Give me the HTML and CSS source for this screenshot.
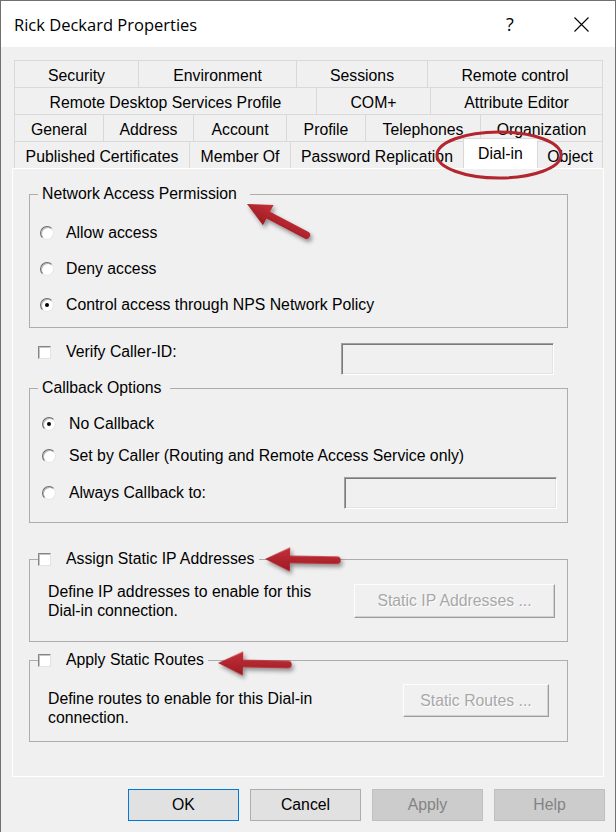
FILE: index.html
```html
<!DOCTYPE html>
<html>
<head>
<meta charset="utf-8">
<title>Rick Deckard Properties</title>
<link rel="stylesheet" href="styles.css">
</head>
<body>
<div class="window">
  <div class="titlebar">
    <div class="title">Rick Deckard Properties</div>
    <div class="caption help">?</div>
    <div class="caption close">
      <svg width="15" height="15" viewBox="0 0 15 15"><path d="M0.5 0.5L14.5 14.5M14.5 0.5L0.5 14.5" stroke="#000" stroke-width="1.1" fill="none"/></svg>
    </div>
  </div>
  <div class="client">
    <div class="tabs">
      <div class="tabrow">
        <div class="tab w-security">Security</div>
        <div class="tab w-env">Environment</div>
        <div class="tab w-sessions">Sessions</div>
        <div class="tab w-remote">Remote control</div>
      </div>
      <div class="tabrow">
        <div class="tab w-rdsp">Remote Desktop Services Profile</div>
        <div class="tab w-com">COM+</div>
        <div class="tab w-attr">Attribute Editor</div>
      </div>
      <div class="tabrow">
        <div class="tab w-general">General</div>
        <div class="tab w-address">Address</div>
        <div class="tab w-account">Account</div>
        <div class="tab w-profile">Profile</div>
        <div class="tab w-tel">Telephones</div>
        <div class="tab w-org">Organization</div>
      </div>
      <div class="tabrow">
        <div class="tab w-pub">Published Certificates</div>
        <div class="tab w-member">Member Of</div>
        <div class="tab w-pwd">Password Replication</div>
        <div class="tab w-dial active">Dial-in</div>
        <div class="tab w-object">Object</div>
      </div>
    </div>

    <div class="panel">
      <fieldset class="group nap">
        <legend class="text-legend">Network Access Permission</legend>
        <div class="opt"><span class="radio"></span><span>Allow access</span></div>
        <div class="opt"><span class="radio"></span><span>Deny access</span></div>
        <div class="opt"><span class="radio on"></span><span>Control access through NPS Network Policy</span></div>
      </fieldset>

      <div class="verify">
        <div class="chk-line"><span class="check"></span><span>Verify Caller-ID:</span></div>
        <span class="textbox"></span>
      </div>

      <fieldset class="group callback">
        <legend class="text-legend cb-legend">Callback Options</legend>
        <div class="opt"><span class="radio on"></span><span>No Callback</span></div>
        <div class="opt second"><span class="radio"></span><span>Set by Caller (Routing and Remote Access Service only)</span></div>
        <div class="opt third"><span class="radio"></span><span>Always Callback to:</span><span class="textbox"></span></div>
      </fieldset>

      <fieldset class="group assign">
        <legend class="chk-legend"><span class="chk-line"><span class="check"></span><span>Assign Static IP Addresses</span></span></legend>
        <div class="desc-row">
          <p class="desc">Define IP addresses to enable for this<br>Dial-in connection.</p>
          <button class="sbtn ip" disabled>Static IP Addresses ...</button>
        </div>
      </fieldset>

      <fieldset class="group routes">
        <legend class="chk-legend"><span class="chk-line"><span class="check"></span><span>Apply Static Routes</span></span></legend>
        <div class="desc-row">
          <p class="desc">Define routes to enable for this Dial-in<br>connection.</p>
          <button class="sbtn rt" disabled>Static Routes ...</button>
        </div>
      </fieldset>
    </div>

    <div class="actions">
      <button class="btn default">OK</button>
      <button class="btn">Cancel</button>
      <button class="btn" disabled>Apply</button>
      <button class="btn" disabled>Help</button>
    </div>
  </div>

  <svg class="annot" width="616" height="832" viewBox="0 0 616 832">
    <defs>
      <filter id="sh" x="-30%" y="-60%" width="170%" height="240%">
        <feDropShadow dx="2" dy="3" stdDeviation="2" flood-color="#000" flood-opacity="0.4"/>
      </filter>
      <linearGradient id="ag" x1="0" y1="0" x2="0" y2="1">
        <stop offset="0" stop-color="#c8303a"/>
        <stop offset="1" stop-color="#9a1b22"/>
      </linearGradient>
    </defs>
    <ellipse cx="499" cy="155" rx="62" ry="23" fill="none" stroke="#b3262d" stroke-width="3"/>
    <g filter="url(#sh)" fill="url(#ag)">
      <path transform="translate(247 204) rotate(27.6)" d="M0 0L24 -11.5L24 -3.8L67 -3.8A3.8 3.8 0 0 1 67 3.8L24 3.8L24 11.5Z"/>
      <path transform="translate(265 559) rotate(1)" d="M0 0L25 -12L25 -3.8L72 -3.8A3.8 3.8 0 0 1 72 3.8L25 3.8L25 12Z"/>
      <path transform="translate(218 663) rotate(1.2)" d="M0 0L25 -12L25 -3.8L70 -3.8A3.8 3.8 0 0 1 70 3.8L25 3.8L25 12Z"/>
    </g>
  </svg>
</div>
</body>
</html>
```

FILE: styles.css
```css
body {
  margin: 0;
  background: #fff;
  font-family: "Liberation Sans", Arial, sans-serif;
  font-size: 15.8px;
  color: #000;
}

.window {
  position: relative;
  width: 616px;
  height: 832px;
  box-sizing: border-box;
  border: 1px solid #707070;
  border-bottom: 0;
  background: #f0f0f0;
  overflow: hidden;
}

.titlebar {
  height: 46px;
  background: #fff;
  display: flex;
  align-items: center;
  padding: 0 11px 0 13px;
}
.title {
  flex: 1;
  font-family: "Open Sans", "Noto Sans", sans-serif;
  font-size: 16.5px;
}
.caption {
  width: 46px;
  height: 46px;
  display: flex;
  align-items: center;
  justify-content: center;
}
.help {
  margin-right: 25px;
  font-family: "Open Sans", "Noto Sans", sans-serif;
  font-size: 18px;
}

.client {
  padding: 13px 11px 0;
}

/* tabs */
.tabs { margin: 0 1px 0 2px; }
.tabrow { display: flex; height: 27px; }
.tab {
  box-sizing: border-box;
  height: 27px;
  border-top: 1px solid #d9d9d9;
  border-left: 1px solid #d9d9d9;
  padding-top: 3px;
  line-height: 23px;
  text-align: center;
  white-space: nowrap;
  flex: none;
}
.tab:last-child { border-right: 1px solid #d9d9d9; }
.tab.active {
  background: #fff;
  margin-top: -3px;
  height: 30px;
}
.w-security { width: 124px; }
.w-env { width: 158px; }
.w-sessions { width: 131px; }
.w-remote { width: 176px; }
.w-rdsp { width: 302px; }
.w-com { width: 114px; }
.w-attr { width: 173px; }
.w-general { width: 89px; }
.w-address { width: 90px; }
.w-account { width: 93px; }
.w-profile { width: 79px; }
.w-tel { width: 115px; }
.w-org { width: 123px; }
.w-pub { width: 175px; }
.w-member { width: 101px; }
.w-pwd { width: 173px; }
.w-dial { width: 74px; }
.w-object { width: 66px; }

/* panel */
.panel {
  border: 1px solid #fff;
  padding: 16px 35px 34px 16px;
}

.group {
  margin: 0;
  padding: 0;
  border: 1px solid #adadad;
  min-width: 0;
}
legend {
  height: 18px;
  line-height: 18px;
  padding: 0;
}
.text-legend {
  margin-left: 8px;
  padding: 0 13px 0 4px;
}
.cb-legend { padding-right: 9px; }
.chk-legend {
  margin-left: 8px;
  padding: 0 4px 0 0;
}

.opt {
  display: flex;
  align-items: center;
  height: 18px;
}

.radio {
  flex: none;
  position: relative;
  width: 14px;
  height: 14px;
  box-sizing: border-box;
  border-radius: 50%;
  background: #fff;
  border: 1px solid;
  border-color: #6a6a6a #e6e6e6 #e6e6e6 #6a6a6a;
  box-shadow: inset 1px 1px 0 #b8b8b8;
}
.radio.on::after {
  content: "";
  position: absolute;
  left: 4px;
  top: 4px;
  width: 4px;
  height: 4px;
  border-radius: 50%;
  background: #000;
}

.check {
  flex: none;
  width: 13px;
  height: 13px;
  box-sizing: border-box;
  background: #fff;
  border: 1px solid;
  border-color: #858585 #e3e3e3 #e3e3e3 #858585;
  box-shadow: inset 1px 1px 0 #c4c4c4;
  margin-right: 15px;
}
.chk-line {
  display: flex;
  align-items: center;
  height: 18px;
}

.textbox {
  display: block;
  box-sizing: border-box;
  width: 213px;
  height: 32px;
  margin-left: auto;
  background: #f0f0f0;
  border: 1px solid;
  border-color: #a0a0a0 #fff #fff #a0a0a0;
  box-shadow: inset 1px 1px 0 #7a7a7a, inset -1px -1px 0 #e3e3e3;
}

/* network access permission */
.nap { padding: 21px 0 13px; }
.nap .opt { padding-left: 10px; }
.nap .radio { margin-right: 12px; }
.nap .opt + .opt { margin-top: 18px; }

/* verify */
.verify {
  display: flex;
  align-items: flex-start;
  margin-top: 15px;
  padding: 0 14px 0 9px;
}

/* callback */
.callback { margin-top: 4px; padding: 18px 0 13px; }
.callback .opt { padding-left: 12px; }
.callback .radio { margin-right: 13px; }
.callback .opt.second { margin-top: 14px; }
.callback .opt.third {
  height: 32px;
  margin-top: 12px;
  padding-right: 10px;
}

/* static groups */
.assign { margin-top: 27px; padding: 14px 0 21px; }
.routes { margin-top: 9px; padding: 15px 0 14px; }
.desc-row {
  display: flex;
  align-items: flex-start;
}
.assign .desc-row { padding: 0 12px 0 18px; }
.routes .desc-row { padding: 0 18px 0 18px; }
.desc {
  margin: 0;
  line-height: 19px;
}
.routes .desc { margin-top: 5px; }

.sbtn {
  margin-left: auto;
  box-sizing: border-box;
  background: #f0f0f0;
  border: 1px solid;
  border-color: #fdfdfd #9c9c9c #9c9c9c #fdfdfd;
  box-shadow: inset -1px -1px 0 #d2d2d2;
  color: #a8a8a8;
  text-shadow: 1px 1px 0 #fff;
  font: inherit;
  padding: 0;
}
.sbtn.ip { width: 201px; height: 34px; margin-top: 2px; }
.sbtn.rt { width: 146px; height: 33px; }

/* dialog buttons */
.actions {
  display: flex;
  justify-content: flex-end;
  gap: 11px;
  margin: 12px -1px 0 0;
}
.btn {
  width: 111px;
  height: 32px;
  box-sizing: border-box;
  background: #e1e1e1;
  border: 1px solid #adadad;
  font: inherit;
  color: #000;
  padding: 0;
}
.btn.default { border-color: #0078d7; }
.btn:disabled {
  background: #cccccc;
  border-color: #bfbfbf;
  color: #838383;
}

.annot {
  position: absolute;
  left: -1px;
  top: -1px;
  pointer-events: none;
}
```
